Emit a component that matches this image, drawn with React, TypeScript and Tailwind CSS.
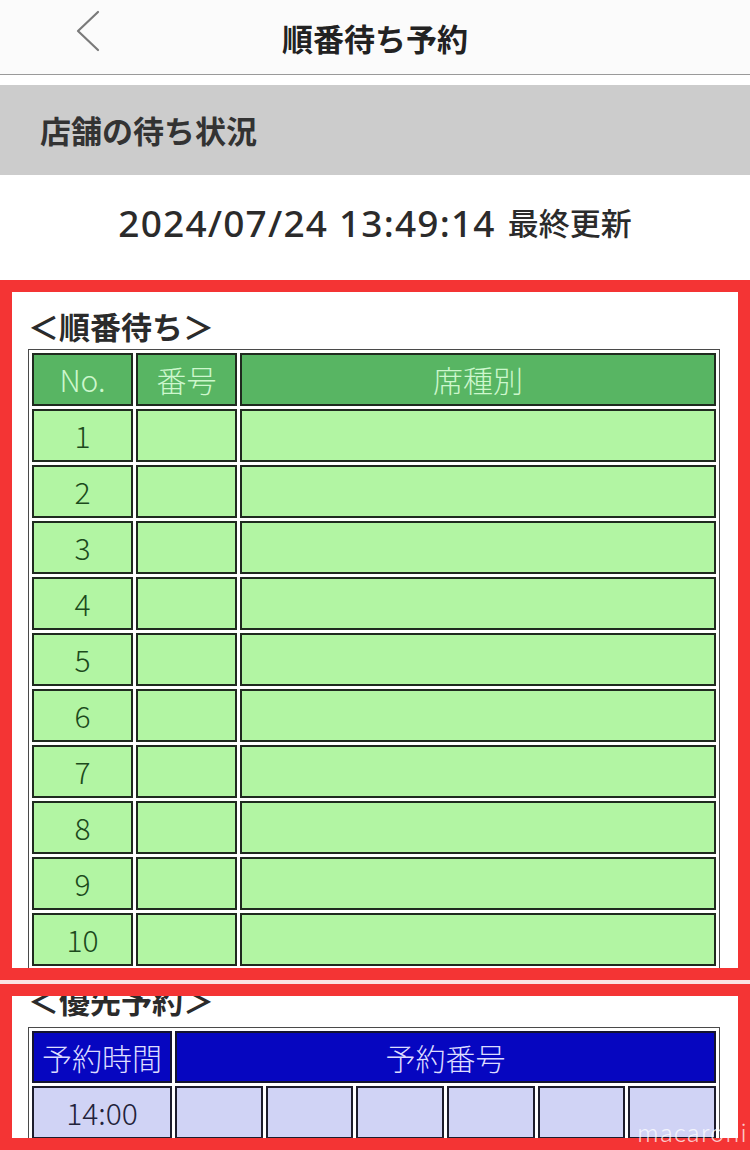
const WAIT_ROWS = [1, 2, 3, 4, 5, 6, 7, 8, 9, 10];
const RESERVE_SLOTS = [0, 1, 2, 3, 4, 5];

function BackChevron() {
  return (
    <svg width="28" height="42" viewBox="0 0 28 42" fill="none">
      <path d="M24 2 L4 21 L24 40" stroke="#7a7a7a" strokeWidth="2.2" strokeLinecap="round" strokeLinejoin="round" />
    </svg>
  );
}

function WaitTable() {
  return (
    <div className="grid w-[692px] grid-cols-[101px_101px_1fr] gap-[3px] border border-[#4a4a4a] p-[3px]">
      <div className="flex h-[53px] items-center justify-center border-2 border-[#1f2a1f] bg-[#58b563] text-[30px] font-light text-[#cdf7cd]">
        No.
      </div>
      <div className="flex h-[53px] items-center justify-center border-2 border-[#1f2a1f] bg-[#58b563] text-[30px] font-light text-[#cdf7cd]">
        番号
      </div>
      <div className="flex h-[53px] items-center justify-center border-2 border-[#1f2a1f] bg-[#58b563] text-[30px] font-light text-[#cdf7cd]">
        席種別
      </div>
      {WAIT_ROWS.map((n) => (
        <div key={n} className="contents">
          <div className="flex h-[53px] items-center justify-center border-2 border-[#1f2a1f] bg-[#b2f5a3] text-[30px] font-light text-[#1c4a1c]">
            {n}
          </div>
          <div className="h-[53px] border-2 border-[#1f2a1f] bg-[#b2f5a3]" />
          <div className="h-[53px] border-2 border-[#1f2a1f] bg-[#b2f5a3]" />
        </div>
      ))}
    </div>
  );
}

function ReserveTable() {
  return (
    <div className="grid w-[692px] grid-cols-[140px_repeat(6,1fr)] gap-[3px] border border-[#4a4a4a] p-[3px]">
      <div className="flex h-[52px] items-center justify-center border-2 border-[#141430] bg-[#0606c0] text-[30px] font-light text-[#dcdcff]">
        予約時間
      </div>
      <div className="col-span-6 flex h-[52px] items-center justify-center border-2 border-[#141430] bg-[#0606c0] text-[30px] font-light text-[#dcdcff]">
        予約番号
      </div>
      <div className="flex h-[53px] items-center justify-center border-2 border-[#1c1c2c] bg-[#d0d3f5] text-[30px] font-light text-[#22223a]">
        14:00
      </div>
      {RESERVE_SLOTS.map((i) => (
        <div key={i} className="h-[53px] border-2 border-[#1c1c2c] bg-[#d0d3f5]" />
      ))}
    </div>
  );
}

export default function App() {
  return (
    <div className="relative h-[1150px] w-[750px] overflow-hidden bg-white font-['Noto_Sans_CJK_JP','Noto_Sans',sans-serif] text-[#2b2b2b]">
      <header className="relative flex h-[75px] items-center justify-center border-b border-[#9a9a9a] bg-[#fbfbfb]">
        <div className="absolute left-[74px] top-[10px]">
          <BackChevron />
        </div>
        <h1 className="text-[31px] font-bold leading-none text-[#222]">順番待ち予約</h1>
      </header>

      <div className="h-[10px]" />

      <div className="flex h-[90px] items-center bg-[#cccccc] pl-[40px] text-[31px] font-bold text-[#333]">
        店舗の待ち状況
      </div>

      <div className="flex h-[105px] items-center justify-center pb-[10px] text-[#2b2b2b]">
        <span className="font-['Noto_Sans','Noto_Sans_CJK_JP',sans-serif] text-[37px] font-medium tracking-[1.2px]">
          2024/07/24 13:49:14
        </span>
        <span className="ml-[12px] text-[31px] font-medium">最終更新</span>
      </div>

      <section className="box-border h-[700px] overflow-hidden border-[12px] border-[#f43434] bg-white pl-[16px]">
        <h2 className="mt-[14px] mb-[3px] h-[40px] text-[31px] font-bold leading-[40px] text-[#2b2b2b]">
          ＜順番待ち＞
        </h2>
        <WaitTable />
      </section>

      <div className="h-[4px] bg-[#fbe3e3]" />

      <section className="box-border h-[166px] overflow-hidden border-[12px] border-[#f43434] bg-white pl-[16px]">
        <h2 className="mt-[-16px] mb-[7px] h-[40px] text-[31px] font-bold leading-[40px] text-[#2b2b2b]">
          ＜優先予約＞
        </h2>
        <ReserveTable />
      </section>

      <span className="absolute left-[637px] top-[1114px] text-[24px] font-light tracking-[1px] text-white/75">
        macaroni
      </span>
    </div>
  );
}
